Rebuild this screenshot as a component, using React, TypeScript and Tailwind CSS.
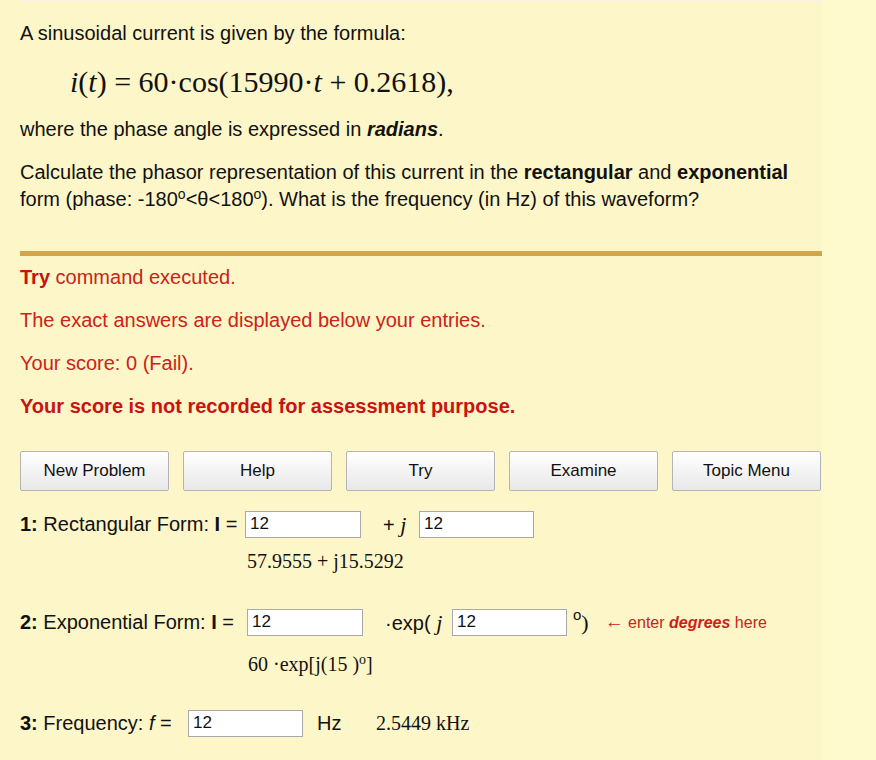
import React from 'react';

const sans = "font-['Liberation_Sans',Arial,sans-serif]";
const serif = "font-['Liberation_Serif','Times_New_Roman',serif]";

function Field({ value, className = '' }: { value: string; className?: string }) {
  return (
    <input
      type="text"
      defaultValue={value}
      className={`h-[27px] border border-[#a9a9a9] bg-white pl-[4px] text-[17px] text-[#111] outline-none ${sans} ${className}`}
    />
  );
}

const buttons = ['New Problem', 'Help', 'Try', 'Examine', 'Topic Menu'];

export default function App() {
  return (
    <div className={`min-h-[760px] w-[876px] bg-[#fffacd] ${sans} text-[#111]`}>
      <div className="w-[822px] bg-[#fdf6c8] pl-[20px] pb-[24px]">
        <div className="h-[2px] bg-[#fbf3df]" />

        {/* Question */}
        <p className="mt-[18px] text-[20px] leading-[27px]">A sinusoidal current is given by the formula:</p>
        <p className={`mt-[17px] pl-[50px] text-[30px] leading-[36px] ${serif}`}>
          <i>i</i>(<i>t</i>) = 60·cos(15990·<i>t</i> + 0.2618),
        </p>
        <p className="mt-[16px] text-[20px] leading-[27px]">
          where the phase angle is expressed in <b><i>radians</i></b>.
        </p>
        <p className="mt-[16px] text-[20px] leading-[27px]">
          Calculate the phasor representation of this current in the <b>rectangular</b> and <b>exponential</b>
          <br />
          form (phase: -180<sup className="text-[14px]">o</sup>&lt;θ&lt;180<sup className="text-[14px]">o</sup>). What is the frequency (in Hz) of this waveform?
        </p>

        <div className="mt-[38px] h-[5px] w-[802px] bg-[#d1a64a]" />

        {/* Feedback */}
        <div className="text-[20px] leading-[27px] text-[#cc2218]">
          <p className="mt-[8px]"><b className="text-[#c4120c]">Try</b> command executed.</p>
          <p className="mt-[16px]">The exact answers are displayed below your entries.</p>
          <p className="mt-[16px]">Your score: 0 (Fail).</p>
          <p className="mt-[16px] font-bold text-[#cc1111]">Your score is not recorded for assessment purpose.</p>
        </div>

        {/* Buttons */}
        <div className="mt-[31px] flex gap-[14px]">
          {buttons.map((b) => (
            <button
              key={b}
              className="h-[40px] w-[149px] rounded-[2px] border border-[#b4b4b4] bg-gradient-to-b from-[#ffffff] to-[#e8e8e8] text-[17px] text-[#111]"
            >
              {b}
            </button>
          ))}
        </div>

        {/* Row 1 */}
        <div className="mt-[19px] flex h-[28px] items-center text-[20px]">
          <span className="w-[225px]"><b>1:</b> Rectangular Form: <b>I</b> =</span>
          <Field value="12" className="w-[116px]" />
          <span className="ml-[22px] w-[36px]">+ <i className={`${serif} text-[22px]`}>j</i></span>
          <Field value="12" className="w-[115px]" />
        </div>
        <div className={`mt-[11px] pl-[227px] text-[20px] leading-[24px] ${serif}`}>57.9555 + j15.5292</div>

        {/* Row 2 */}
        <div className="mt-[35px] flex h-[28px] items-center text-[20px]">
          <span className="w-[227px]"><b>2:</b> Exponential Form: <b>I</b> =</span>
          <Field value="12" className="w-[116px]" />
          <span className="ml-[22px] w-[67px]">·exp( <i className={`${serif} text-[22px]`}>j</i></span>
          <Field value="12" className="w-[115px]" />
          <span className="ml-[6px] flex items-start">
            <span className="relative top-[-2px] text-[15px]">o</span>
            <span className={`${serif} text-[22px]`}>)</span>
          </span>
          <span className="ml-[16px] text-[16px] text-[#cc2218]">
            <span className="text-[19px]">←</span> enter <b><i>degrees</i></b> here
          </span>
        </div>
        <div className={`mt-[16px] pl-[228px] text-[20px] leading-[24px] ${serif}`}>
          60 ·exp[j(15 )<sup className="text-[14px]">o</sup>]
        </div>

        {/* Row 3 */}
        <div className="mt-[33px] flex h-[28px] items-center text-[20px]">
          <span className="w-[168px]"><b>3:</b> Frequency: <i>f</i> =</span>
          <Field value="12" className="w-[115px]" />
          <span className="ml-[14px] w-[59px]">Hz</span>
          <span className={`${serif} text-[20px]`}>2.5449 kHz</span>
        </div>
      </div>
    </div>
  );
}
